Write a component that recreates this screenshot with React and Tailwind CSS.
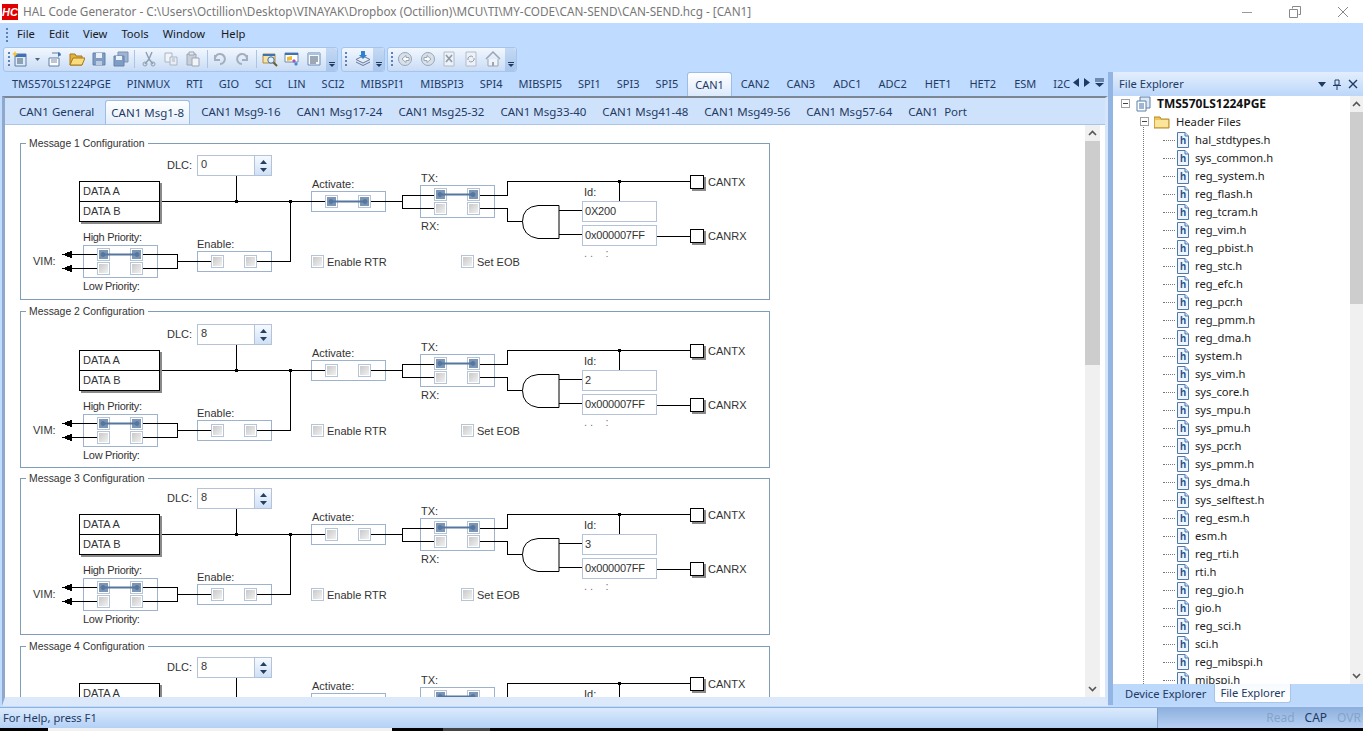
import React from 'react';

const mainTabs = ['TMS570LS1224PGE', 'PINMUX', 'RTI', 'GIO', 'SCI', 'LIN', 'SCI2', 'MIBSPI1', 'MIBSPI3', 'SPI4', 'MIBSPI5', 'SPI1', 'SPI3', 'SPI5', 'CAN1', 'CAN2', 'CAN3', 'ADC1', 'ADC2', 'HET1', 'HET2', 'ESM', 'I2C'];
const tabNudge = { CAN3: 'ml-px', ADC1: 'ml-[2px]', ADC2: 'ml-px', HET1: 'ml-[2px]', HET2: 'ml-[2px]', ESM: 'ml-[2px]', I2C: 'ml-px' };
const subTabs = ['CAN1 General', 'CAN1 Msg1-8', 'CAN1 Msg9-16', 'CAN1 Msg17-24', 'CAN1 Msg25-32', 'CAN1 Msg33-40', 'CAN1 Msg41-48', 'CAN1 Msg49-56', 'CAN1 Msg57-64', 'CAN1  Port'];
const files = ['hal_stdtypes.h', 'sys_common.h', 'reg_system.h', 'reg_flash.h', 'reg_tcram.h', 'reg_vim.h', 'reg_pbist.h', 'reg_stc.h', 'reg_efc.h', 'reg_pcr.h', 'reg_pmm.h', 'reg_dma.h', 'system.h', 'sys_vim.h', 'sys_core.h', 'sys_mpu.h', 'sys_pmu.h', 'sys_pcr.h', 'sys_pmm.h', 'sys_dma.h', 'sys_selftest.h', 'reg_esm.h', 'esm.h', 'reg_rti.h', 'rti.h', 'reg_gio.h', 'gio.h', 'reg_sci.h', 'sci.h', 'reg_mibspi.h', 'mibspi.h'];

const Ico = ({ children, className = '' }) => (
  <svg width="16" height="16" viewBox="0 0 16 16" className={`shrink-0 ${className}`}>{children}</svg>
);

const Grip = () => (
  <div className="flex flex-col gap-[2px] w-[3px] shrink-0">
    <span className="w-[2px] h-[2px] bg-[#5b83b8]" />
    <span className="w-[2px] h-[2px] bg-[#5b83b8]" />
    <span className="w-[2px] h-[2px] bg-[#5b83b8]" />
    <span className="w-[2px] h-[2px] bg-[#5b83b8]" />
  </div>
);

const Sep = () => <div className="w-px h-[18px] bg-[#a9c4e6] shrink-0" />;

const More = ({ className = '' }) => (
  <div className={`h-full self-stretch bg-gradient-to-b from-[#c4d9f4] to-[#a9c6ec] rounded-r-[3px] flex flex-col items-center justify-end pb-[4px] shrink-0 ${className}`}>
    <span className="w-[6px] h-px bg-[#1f3a63] mb-px" />
    <svg width="6" height="3" viewBox="0 0 6 3"><path d="M0 0H6L3 3Z" fill="#1f3a63" /></svg>
  </div>
);

const Group = ({ className, children }) => (
  <div className={`h-[25px] flex items-center rounded-[3px] border border-[#a6c5ec] bg-gradient-to-b from-[#f2f7fe] to-[#c9dcf5] overflow-hidden ${className}`}>
    {children}
  </div>
);

const Check = ({ className, on }) => (
  <div className={`absolute w-[13px] h-[13px] border border-[#b6c4d8] bg-white p-[1px] ${className}`}>
    <div className={`w-full h-full ${on ? 'bg-[#7c95b5]' : 'bg-gradient-to-br from-[#c9c9c9] to-[#f1f1f1]'}`} />
  </div>
);

const Frame = ({ className }) => <div className={`absolute border border-[#9db2cc] bg-white ${className}`} />;

const Lbl = ({ className, children }) => (
  <span className={`absolute leading-4 text-[#333] whitespace-pre ${className}`}>{children}</span>
);

const Port = ({ className }) => (
  <div className={`absolute w-[14px] h-[14px] border border-black bg-white shadow-[2px_2px_0_#8a8a8a] ${className}`} />
);

const Field = ({ className, children }) => (
  <div className={`absolute w-[75px] border border-[#b4c3d8] bg-white pl-[2px] flex items-center text-[#333] tracking-[-0.2px] ${className}`}>{children}</div>
);

const Message = ({ n, dlc, id, active, className, shift }) => (
  <div className={`relative w-[750px] h-[157px] shrink-0 border border-[#7f9db9] ml-[15px] text-[11px] font-['Liberation_Sans',sans-serif] ${className}`}>
    <span className="absolute left-[5px] -top-[8px] bg-white px-[3px] leading-4 text-[#333] text-[10.4px]">{`Message ${n} Configuration`}</span>
    <div className={`absolute left-[-1px] w-[750px] h-[157px] ${shift}`}>
      <Frame className="left-[291px] top-[48px] w-[75px] h-[21px]" />
      <Frame className="left-[177px] top-[108px] w-[75px] h-[21px]" />
      <Frame className="left-[63px] top-[102px] w-[75px] h-[33px]" />
      <Frame className="left-[400px] top-[42px] w-[75px] h-[33px]" />

      <svg className="absolute left-0 top-0" width="750" height="157" viewBox="0 0 750 157" fill="none" stroke="#000" shapeRendering="crispEdges">
        <path d="M140 58.5H291M216.5 32V58M270.5 58V118.5H252M177 118.5H191M237 118.5H252M138 111.5H157.5V125.5H138M157.5 118.5H177M52 111.5H77M123 111.5H138M52 125.5H77M123 125.5H138" />
        <path d="M291 58.5H305M351 58.5H366M366 58.5H382.5V52.5H414M382.5 58.5V65.5H414M460 52.5H487.5V38.5H670M599.5 38.5V58M460 65.5H487.5V78.5H503M539 67.5H562M539 91.5H562M637 93.5H670" />
        <path d="M539 62.5H518Q502.5 64 502.5 78.5Q502.5 93 518 95.5H539Z" fill="#fff" shapeRendering="auto" />
        <circle cx="216.5" cy="58.5" r="1.6" fill="#000" stroke="none" />
        <circle cx="270.5" cy="58.5" r="1.6" fill="#000" stroke="none" />
        <circle cx="599.5" cy="38.5" r="1.6" fill="#000" stroke="none" />
        <path d="M42 111.5L52 107.5V115.5ZM42 125.5L52 121.5V129.5Z" fill="#000" stroke="none" />
      </svg>

      <Check className="left-[305px] top-[52px]" on={active} />
      <Check className="left-[338px] top-[52px]" on={active} />
      <Check className="left-[191px] top-[112px]" />
      <Check className="left-[224px] top-[112px]" />
      <Check className="left-[77px] top-[105px]" on />
      <Check className="left-[110px] top-[105px]" on />
      <Check className="left-[77px] top-[119px]" />
      <Check className="left-[110px] top-[119px]" />
      <Check className="left-[414px] top-[45px]" on />
      <Check className="left-[447px] top-[45px]" on />
      <Check className="left-[414px] top-[59px]" />
      <Check className="left-[447px] top-[59px]" />
      <Check className="left-[291px] top-[112px]" />
      <Check className="left-[441px] top-[112px]" />

      <svg className="absolute left-0 top-0" width="750" height="157" viewBox="0 0 750 157" fill="#55779f" stroke="#55779f">
        <path d="M83 111.5H117" strokeWidth="2" />
        <circle cx="83" cy="111.5" r="2" />
        <circle cx="117" cy="111.5" r="2" />
        <path d="M420 51.5H453" strokeWidth="2" />
        <circle cx="420" cy="51.5" r="2" />
        <circle cx="453" cy="51.5" r="2" />
        {active && (
          <g>
            <path d="M311 58.5H345" strokeWidth="2" />
            <circle cx="311" cy="58.5" r="2" />
            <circle cx="345" cy="58.5" r="2" />
          </g>
        )}
      </svg>

      <Lbl className="left-[147px] top-[14px]">DLC:</Lbl>
      <div className="absolute left-[177px] top-[12px] w-[75px] h-[21px] border border-[#b4c3d8] bg-white flex text-[#333]">
        <span className="flex-1 pl-[3px] leading-[17px]">{dlc}</span>
        <div className="w-[17px] flex flex-col items-center justify-center gap-[4px] bg-gradient-to-b from-[#f6faff] to-[#cfe0f6] border-l border-[#b4c3d8]">
          <svg width="7" height="4" viewBox="0 0 7 4"><path d="M0 4L3.5 0L7 4Z" fill="#24405f" /></svg>
          <svg width="7" height="4" viewBox="0 0 7 4"><path d="M0 0L3.5 4L7 0Z" fill="#24405f" /></svg>
        </div>
      </div>

      <div className="absolute left-[59px] top-[38px] w-[81px] h-[41px] border border-black bg-white shadow-[2px_2px_0_#8a8a8a] flex flex-col text-[#333]">
        <span className="h-[20px] pl-[3px] border-b border-black leading-[19px]">DATA A</span>
        <span className="pl-[3px] leading-[19px]">DATA B</span>
      </div>

      <Lbl className="left-[292px] top-[33px]">Activate:</Lbl>
      <Lbl className="left-[63px] top-[86px] tracking-[-0.3px]">High Priority:</Lbl>
      <Lbl className="left-[63px] top-[135px] tracking-[-0.3px]">Low Priority:</Lbl>
      <Lbl className="left-[13px] top-[110px]">VIM:</Lbl>
      <Lbl className="left-[177px] top-[93px]">Enable:</Lbl>
      <Lbl className="left-[307px] top-[111px]">Enable RTR</Lbl>
      <Lbl className="left-[457px] top-[111px]">Set EOB</Lbl>
      <Lbl className="left-[401px] top-[27px]">TX:</Lbl>
      <Lbl className="left-[401px] top-[75px]">RX:</Lbl>
      <Lbl className="left-[564px] top-[41px]">Id:</Lbl>
      <Lbl className="left-[564px] top-[102px] text-[#777]">{'. .    :'}</Lbl>

      <Field className="left-[562px] top-[58px] h-[21px]">{id}</Field>
      <Field className="left-[562px] top-[82px] h-[21px]">0x000007FF</Field>
      <Port className="left-[670px] top-[32px]" />
      <Port className="left-[670px] top-[86px]" />
      <Lbl className="left-[688px] top-[31px]">CANTX</Lbl>
      <Lbl className="left-[688px] top-[85px]">CANRX</Lbl>
    </div>
  </div>
);

const HFile = () => (
  <Ico className="mr-[4px]">
    <path d="M2.5 .5H10L13.5 4V15.5H2.5Z" fill="#eef4fc" stroke="#4f78ad" />
    <path d="M10 .5V4H13.5" fill="#cfe0f4" stroke="#4f78ad" />
    <text x="5" y="12" fontSize="10" fontWeight="700" fontFamily="Liberation Sans" fill="#1d4f8f">h</text>
  </Ico>
);

const Expander = ({ className }) => (
  <div className={`absolute w-[9px] h-[9px] border border-[#a0a0a0] bg-white flex items-center justify-center ${className}`}>
    <span className="w-[5px] h-px bg-[#444]" />
  </div>
);

const ScrollArrow = ({ down }) => (
  <div className="h-[16px] flex items-center justify-center shrink-0 bg-[#f0f0f0]">
    <svg width="9" height="6" viewBox="0 0 9 6" fill="none" stroke="#555" strokeWidth="1.6">
      <path d={down ? 'M1 1L4.5 4.5L8 1' : 'M1 5L4.5 1.5L8 5'} />
    </svg>
  </div>
);

export default function App() {
  return (
    <div className="w-[1363px] h-[731px] flex flex-col overflow-hidden bg-[#bfdbff] text-[11.2px] font-['Noto_Sans',sans-serif] text-[#1f3a63]">
      {/* title bar */}
      <div className="h-[23px] bg-white flex items-center shrink-0">
        <div className="ml-[2px] w-[16px] h-[16px] bg-[#e00000] text-white text-[11px] font-bold italic leading-4 text-center font-['Liberation_Sans',sans-serif]">HC</div>
        <span className="ml-[5px] text-[11.75px] text-[#777] whitespace-pre">{'HAL Code Generator - C:\\Users\\Octillion\\Desktop\\VINAYAK\\Dropbox (Octillion)\\MCU\\TI\\MY-CODE\\CAN-SEND\\CAN-SEND.hcg - [CAN1]'}</span>
        <div className="ml-auto flex items-center">
          <svg width="14" height="14" viewBox="0 0 14 14" className="mr-[34px]"><path d="M2 7.5H12" stroke="#999" /></svg>
          <svg width="14" height="14" viewBox="0 0 14 14" fill="none" stroke="#888" className="mr-[34px]"><path d="M4.5 3.5V1.5H12.5V9.5H10.5M1.5 4.5H9.5V12.5H1.5Z" /></svg>
          <svg width="14" height="14" viewBox="0 0 14 14" fill="none" stroke="#888" className="mr-[13px]"><path d="M2 2L12 12M12 2L2 12" /></svg>
        </div>
      </div>

      {/* menu */}
      <div className="h-[23px] flex items-center shrink-0 pl-[6px] text-[#1a1a1a]">
        <Grip />
        <div className="flex gap-[14px] ml-[8px]">
          <span>File</span><span>Edit</span><span>View</span><span>Tools</span><span>Window</span><span className="ml-[2px]">Help</span>
        </div>
      </div>

      {/* toolbars */}
      <div className="h-[26px] flex items-center gap-[2px] pl-[3px] shrink-0">
        <Group className="w-[335px] pl-[4px]">
          <Grip />
          <Ico className="ml-px"><path d="M3 3H14V15H3Z" fill="#dcebfb" stroke="#5a7da8" /><path d="M3 3H14V6H3Z" fill="#3f72b5" /><path d="M5 8H11M5 10H11M5 12H11" stroke="#44586f" /><path d="M3 0L4 2L6 3L4 4L3 6L2 4L0 3L2 2Z" fill="#f6c431" /></Ico>
          <svg width="5" height="3" viewBox="0 0 5 3" className="ml-[7px] mr-[7px]"><path d="M0 0H5L2.5 3Z" fill="#4c6482" /></svg>
          <Ico><path d="M2 7H12V15H2Z" fill="#fff" stroke="#5f7fa8" /><path d="M5 2H13V5" fill="none" stroke="#5f7fa8" /><path d="M4 9H10M4 11H10" stroke="#7a8da5" /><path d="M11 1L14 3.5L11 6Z" fill="#3f72b5" /></Ico>
          <Ico className="ml-[6px]"><path d="M1 3H6L7 5H13V14H1Z" fill="#e3b23c" stroke="#a8781b" /><path d="M4 7H16L13 14H1Z" fill="#f8dc7e" stroke="#a8781b" /></Ico>
          <Ico className="ml-[6px]"><path d="M2 2H14V14H2Z" fill="#7f9cc4" stroke="#6682a9" /><path d="M5 2H11V7H5Z" fill="#eaf0f8" /><path d="M5 10H11V14H5Z" fill="#bccbe0" /></Ico>
          <Ico className="ml-[6px]"><path d="M5 1H15V11H5Z" fill="#9eb4d2" stroke="#7c93b4" /><path d="M1 5H11V15H1Z" fill="#7f9cc4" stroke="#6682a9" /><path d="M3 5H9V9H3Z" fill="#eaf0f8" /></Ico>
          <div className="ml-[5px]"><Sep /></div>
          <Ico className="ml-[6px]"><path d="M5 1L8 8L11 1M8 8L4 13M8 8L12 13" fill="none" stroke="#8e9eb4" strokeWidth="1.4" /><circle cx="4" cy="13" r="2" fill="none" stroke="#8e9eb4" /><circle cx="12" cy="13" r="2" fill="none" stroke="#8e9eb4" /></Ico>
          <Ico className="ml-[6px]"><path d="M2 2H9V11H2Z" fill="#f0f3f7" stroke="#aab6c5" /><path d="M7 6H14V14H7Z" fill="#e8edf3" stroke="#aab6c5" /><path d="M9 8H12M9 10H12" stroke="#aab6c5" /></Ico>
          <Ico className="ml-[6px]"><path d="M2 3H11V14H2Z" fill="#c9cfd8" stroke="#9aa6b5" /><path d="M4 1H9V4H4Z" fill="#e7eaee" stroke="#9aa6b5" /><path d="M7 7H14V15H7Z" fill="#f2f4f7" stroke="#9aa6b5" /></Ico>
          <div className="ml-[6px]"><Sep /></div>
          <Ico className="ml-[4px]"><path d="M3 9A5 5 0 1 1 8 13M3 4V9H8" fill="none" stroke="#a4afbd" strokeWidth="2" /></Ico>
          <Ico className="ml-[6px]"><path d="M13 9A5 5 0 1 0 8 13M13 4V9H8" fill="none" stroke="#a4afbd" strokeWidth="2" /></Ico>
          <div className="ml-[6px]"><Sep /></div>
          <Ico className="ml-[5px]"><path d="M1 3H13V12H1Z" fill="#f7e3a3" stroke="#b38d3a" /><path d="M1 3H13V5H1Z" fill="#3f72b5" /><circle cx="9" cy="9" r="3.2" fill="#dff0ff" stroke="#3f6ea8" /><path d="M11.5 11.5L15 15" stroke="#6b5a34" strokeWidth="2" /></Ico>
          <Ico className="ml-[6px]"><path d="M1 2H14V11H1Z" fill="#fff" stroke="#6b8ab3" /><path d="M1 2H14V4H1Z" fill="#3f72b5" /><path d="M3 6L8 5V9L3 10Z" fill="#eebc33" /><path d="M10 8L12 10L10 12L8 10Z" fill="#b44fb4" /><path d="M12 11L14 13L12 15L10 13Z" fill="#3f8fd5" /></Ico>
          <Ico className="ml-[6px]"><path d="M2 2H14V14H2Z" fill="#f6f9fd" stroke="#6b8ab3" /><path d="M2 2H14V4H2Z" fill="#a9c2e2" /><path d="M4 6H12M4 8H12M4 10H12M4 12H10" stroke="#44586f" /></Ico>
          <More className="ml-auto w-[11px]" />
        </Group>
        <Group className="w-[44px] pl-[3px] ml-[1px]">
          <Grip />
          <Ico className="ml-[7px]"><path d="M8 5L15 8.5L8 12L1 8.5Z" fill="#e8eef6" stroke="#63789a" /><path d="M1 11L8 14.5L15 11" fill="none" stroke="#63789a" /><path d="M6 0H10V4H12L8 8L4 4H6Z" fill="#2f80d0" /></Ico>
          <More className="ml-auto w-[11px]" />
        </Group>
        <Group className="w-[130px] pl-[3px]">
          <Grip />
          <Ico className="ml-[3px]"><circle cx="8" cy="8" r="6.5" fill="#d7dfe9" stroke="#98a6b8" /><path d="M9 4.5L5 8L9 11.5V9.5H12V6.5H9Z" fill="#fff" stroke="#98a6b8" /></Ico>
          <Ico className="ml-[7px]"><circle cx="8" cy="8" r="6.5" fill="#d7dfe9" stroke="#98a6b8" /><path d="M7 4.5L11 8L7 11.5V9.5H4V6.5H7Z" fill="#fff" stroke="#98a6b8" /></Ico>
          <Ico className="ml-[5px]"><path d="M3 1H13V15H3Z" fill="#eef2f7" stroke="#b2bcc9" /><path d="M5 4L11 11M11 4L5 11" stroke="#8e9bab" strokeWidth="1.6" /></Ico>
          <Ico className="ml-[6px]"><path d="M3 1H13V15H3Z" fill="#eef2f7" stroke="#b2bcc9" /><path d="M5 9A3 3 0 0 1 10 6M11 7A3 3 0 0 1 6 10" fill="none" stroke="#8e9bab" /></Ico>
          <Ico className="ml-[6px]"><path d="M1 8L8 1L15 8" fill="none" stroke="#9aa6b5" strokeWidth="1.5" /><path d="M3 8V15H13V8" fill="#f0f3f7" stroke="#9aa6b5" /><path d="M7 11H9V15H7Z" fill="#9aa6b5" /></Ico>
          <More className="ml-auto w-[11px]" />
        </Group>
      </div>

      {/* workspace */}
      <div className="flex-1 flex min-h-0">
        <div className="w-[1108px] flex flex-col min-h-0 pl-[2px]">
          <div className="h-[24px] flex items-end shrink-0 relative">
            <div className="flex-1 flex items-center gap-[16px] pl-[10px] overflow-hidden h-[24px] w-[1066px] mr-[38px] whitespace-nowrap text-[11px]">
              {mainTabs.map((t) => (
                <span key={t} className={t === 'CAN1' ? 'relative px-[7px] mx-[-7px] h-[24px] leading-[23px] bg-gradient-to-b from-white to-[#dceafc] border border-b-0 border-[#9dbde4] rounded-t-[3px]' : tabNudge[t]}>{t}</span>
              ))}
            </div>
            <div className="absolute right-[4px] top-[6px] flex items-center gap-[5px]">
              <svg width="6" height="9" viewBox="0 0 6 9"><path d="M6 0V9L0 4.5Z" fill="#1f3a63" /></svg>
              <svg width="6" height="9" viewBox="0 0 6 9"><path d="M0 0V9L6 4.5Z" fill="#1f3a63" /></svg>
              <svg width="9" height="9" viewBox="0 0 9 9"><path d="M0 1H9M0 3H9" stroke="#1f3a63" /><path d="M0 5H9L4.5 9Z" fill="#1f3a63" /></svg>
            </div>
          </div>

          <div className="h-[610px] border-t-2 border-[#7d8794] border-l-[3px] border-l-[#8fa9cc] border-r-[3px] border-r-[#d7e6fa] border-b-[9px] border-b-[#dbe9fb] flex flex-col min-h-0 bg-white">
            <div className="h-[27px] shrink-0 bg-[#cfe2fb] flex items-end gap-[16px] pl-[14px] border-b border-[#a9c4e6] whitespace-pre text-[11.5px]">
              {subTabs.map((t) => (
                <span key={t} className={t === 'CAN1 Msg1-8' ? 'px-[5px] mx-[-5px] h-[24px] leading-[23px] bg-gradient-to-b from-white to-[#e3eefc] border border-b-0 border-[#9dbde4] rounded-t-[3px]' : 'h-[24px] leading-[23px]'}>{t}</span>
              ))}
            </div>
            <div className="flex-1 flex min-h-0 overflow-hidden">
              <div className="flex-1 overflow-hidden pt-[18px] flex flex-col">
                <Message n={1} dlc="0" id="0X200" active shift="top-[-1px]" />
                <Message n={2} dlc="8" id="2" className="mt-[11px]" shift="top-0" />
                <Message n={3} dlc="8" id="3" className="mt-[10px]" shift="top-[-3px]" />
                <Message n={4} dlc="8" id="4" className="mt-[11px]" shift="top-[-2px]" />
              </div>
              <div className="w-[15px] flex flex-col shrink-0 mr-[5px] bg-[#f0f0f0]">
                <ScrollArrow />
                <div className="h-[224px] bg-[#cdcdcd] shrink-0" />
                <div className="flex-1" />
                <ScrollArrow down />
              </div>
            </div>
          </div>
        </div>

        <div className="w-[5px] bg-[#93b5e3] h-[633px] shrink-0" />

        <div className="flex-1 flex flex-col min-w-0 h-[633px]">
          <div className="h-[24px] shrink-0 bg-gradient-to-b from-[#e3eefd] to-[#bcd7fa] flex items-center pl-[6px]">
            <span>File Explorer</span>
            <div className="ml-auto flex items-center gap-[6px] pr-[5px]">
              <svg width="8" height="5" viewBox="0 0 8 5"><path d="M0 0H8L4 5Z" fill="#1f3a63" /></svg>
              <svg width="10" height="11" viewBox="0 0 10 11" fill="none" stroke="#1f3a63"><path d="M3 1H7V6H3ZM1 6.5H9M5 7V11" /></svg>
              <svg width="10" height="10" viewBox="0 0 10 10" stroke="#1f3a63" strokeWidth="1.4"><path d="M1 1L9 9M9 1L1 9" /></svg>
            </div>
          </div>
          <div className="h-[588px] shrink-0 flex bg-white overflow-hidden">
            <div className="flex-1 relative overflow-hidden text-[#222]">
              <div className="absolute left-[30px] top-[26px] h-[570px] border-l border-dotted border-[#777]" />
              <div className="h-[18px] flex items-center pl-[23px] mt-[-1px] relative">
                <Expander className="left-[8px] top-[4px]" />
                <Ico className="mr-[5px]"><path d="M4 1H14V12H4Z" fill="#dce8f6" stroke="#5c7ea8" /><path d="M1 5H10V15H1Z" fill="#fff" stroke="#5c7ea8" /><path d="M3 8H8M3 10H8M3 12H8" stroke="#3d6ea6" /></Ico>
                <span className="font-bold text-[#111] text-[12px]">TMS570LS1224PGE</span>
              </div>
              <div className="h-[18px] flex items-center pl-[41px] relative">
                <Expander className="left-[27px] top-[4px]" />
                <Ico className="mr-[6px]"><path d="M0 3H6L7 5H15V14H0Z" fill="#f0c552" stroke="#b48a2c" /><path d="M1 6H14V13H1Z" fill="#fbe59c" /></Ico>
                <span>Header Files</span>
              </div>
              {files.map((f) => (
                <div key={f} className="h-[18px] flex items-center pl-[62px] relative whitespace-nowrap">
                  <span className="absolute left-[50px] top-[9px] w-[12px] border-t border-dotted border-[#777]" />
                  <HFile />
                  <span>{f}</span>
                </div>
              ))}
            </div>
            <div className="w-[13px] flex flex-col shrink-0 bg-[#f0f0f0]">
              <ScrollArrow />
              <div className="h-[192px] bg-[#cdcdcd] shrink-0" />
              <div className="flex-1" />
              <ScrollArrow down />
            </div>
          </div>
          <div className="h-[21px] shrink-0 flex items-start pl-[12px] bg-[#bcd8fb]">
            <span className="leading-[19px]">Device Explorer</span>
            <span className="ml-[8px] px-[5px] h-[19px] leading-[18px] bg-gradient-to-b from-[#f6faff] to-white border border-t-0 border-[#a9c4e6] rounded-b-[3px]">File Explorer</span>
          </div>
        </div>
      </div>

      {/* status bar */}
      <div className="h-[21px] flex shrink-0 mt-[-1px] border-t border-[#8fb0dc]">
        <div className="w-[1157px] bg-gradient-to-b from-[#dcebfd] to-[#b3d0f5] pl-[3px] leading-[20px]">For Help, press F1</div>
        <div className="flex-1 bg-gradient-to-b from-[#8fb1de] to-[#b6d0f2] flex items-center justify-end gap-[10px] pr-[2px] border-l border-[#7e9fc9] text-[12px]">
          <span className="text-[#84a3cb]">Read</span>
          <span className="text-[#1f3a63]">CAP</span>
          <span className="text-[#84a3cb]">OVR</span>
        </div>
      </div>

      <div className="h-[3px] flex shrink-0 bg-black">
        <div className="ml-[48px] w-[344px] bg-[#f1f1f1]" />
        <div className="ml-[51px] w-[47px] bg-[#444]" />
      </div>
    </div>
  );
}
